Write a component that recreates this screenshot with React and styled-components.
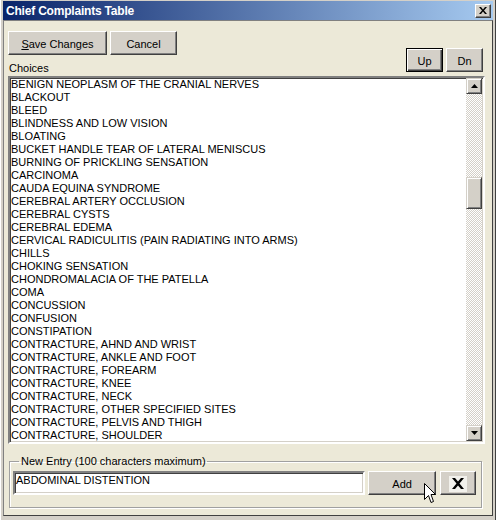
import React from 'react';
import styled, { createGlobalStyle } from 'styled-components';

const GlobalStyle = createGlobalStyle`
  html, body {
    margin: 0;
    padding: 0;
    width: 496px;
    height: 520px;
    overflow: hidden;
    background: #d4d0c8;
  }
  * {
    box-sizing: border-box;
  }
`;

const FONT = `"Liberation Sans", Arial, sans-serif`;

const Window = styled.div`
  position: relative;
  width: 496px;
  height: 520px;
  padding: 1px 2px 4px 3px;
  background: #d4d0c8;
  border-right: 1px solid #404040;
  box-shadow: inset 1px 0 #fff;
  display: flex;
  flex-direction: column;
  font-family: ${FONT};
  font-size: 11px;
  color: #000;
`;

const TitleBar = styled.div`
  height: 19px;
  flex: none;
  display: flex;
  align-items: center;
  justify-content: space-between;
  padding: 0 2px 0 3px;
  background: linear-gradient(to right, #0a246a, #a6caf0);
`;

const Title = styled.span`
  color: #fff;
  font-weight: bold;
  font-size: 12px;
  letter-spacing: -0.2px;
`;

const CloseBox = styled.div`
  width: 16px;
  height: 14px;
  background: #d4d0c8;
  border: 1px solid;
  border-color: #fff #404040 #404040 #fff;
  box-shadow: inset -1px -1px #808080;
  display: flex;
  align-items: center;
  justify-content: center;
`;

const Client = styled.div`
  flex: 1;
  display: flex;
  flex-direction: column;
  background: #ece9d8;
  border: 1px solid;
  border-color: #808080 #404040 #404040 #808080;
`;

const TopArea = styled.div`
  display: flex;
  justify-content: space-between;
  align-items: flex-end;
  padding: 10px 9px 0 4px;
`;

const LeftColumn = styled.div`
  display: flex;
  flex-direction: column;
`;

const ButtonRow = styled.div`
  display: flex;
  gap: ${p => p.$gap || 3}px;
`;

const Button = styled.div`
  width: ${p => p.$w}px;
  height: 24px;
  display: flex;
  align-items: center;
  justify-content: center;
  background: #d4d0c8;
  border: 1px solid;
  border-color: ${p => (p.$focused ? '#000' : '#fff #404040 #404040 #fff')};
  box-shadow: ${p =>
    p.$focused
      ? 'inset 1px 1px #fff, inset -1px -1px #404040, inset -2px -2px #808080'
      : 'inset -1px -1px #808080'};
  font-family: ${FONT};
  font-size: 11px;
  color: #000;
  padding-top: 1px;
`;

const Underlined = styled.span`
  text-decoration: underline;
  text-underline-offset: 1px;
`;

const Label = styled.div`
  margin-top: 7px;
  height: 14px;
  line-height: 13px;
  padding-left: 1px;
`;

const UpDn = styled(ButtonRow)`
  margin-bottom: 4px;
`;

const ListBox = styled.div`
  margin: 0 7px 0 4px;
  height: 368px;
  display: flex;
  background: #fff;
  border: 2px solid;
  border-color: #808080 #fff #fff #808080;
  box-shadow: inset 1px 1px #404040, inset -1px -1px #d4d0c8;
  padding: 0 1px 1px 1px;
`;

const Items = styled.div`
  flex: 1;
  overflow: hidden;
`;

const Row = styled.div`
  height: 13px;
  line-height: 13px;
  font-size: 11px;
  white-space: nowrap;
  color: #000;
`;

const ScrollBar = styled.div`
  width: 16px;
  display: flex;
  flex-direction: column;
  background-color: #fff;
  background-image: repeating-conic-gradient(#d4d0c8 0% 25%, #fff 0% 50%);
  background-size: 2px 2px;
`;

const ScrollButton = styled.div`
  width: 16px;
  height: 16px;
  flex: none;
  background: #d4d0c8;
  border: 1px solid;
  border-color: #d4d0c8 #404040 #404040 #d4d0c8;
  box-shadow: inset 1px 1px #fff, inset -1px -1px #808080;
  display: flex;
  align-items: center;
  justify-content: center;
`;

const Track = styled.div`
  flex: 1;
  display: flex;
  flex-direction: column;
`;

const Thumb = styled(ScrollButton)`
  height: 32px;
  margin-top: ${p => p.$offset}px;
`;

const Group = styled.fieldset`
  margin: 12px 10px 0 5px;
  padding: 4px 5px 12px 3px;
  border: 1px solid #a0a0a0;
  box-shadow: 1px 1px #fff, inset 1px 1px #fff;
  min-width: 0;
`;

const Legend = styled.legend`
  margin-left: 6px;
  padding: 0 1px 0 2px;
  font-size: 11px;
  line-height: 11px;
  color: #000;
`;

const EntryRow = styled.div`
  display: flex;
  align-items: flex-start;
  gap: 3px;
`;

const EntryBox = styled.div`
  width: 353px;
  height: 24px;
  background: #fff;
  border: 2px solid;
  border-color: #808080 #fff #fff #808080;
  box-shadow: inset 1px 1px #404040, inset -1px -1px #d4d0c8;
  padding: 1px 0 0 1px;
  line-height: 13px;
  font-size: 11px;
  white-space: nowrap;
`;

const ClearButton = styled(Button)`
  margin-left: 1px;
`;

const IconTile = styled.div`
  width: 18px;
  height: 16px;
  background: #f2f1ec;
  display: flex;
  align-items: center;
  justify-content: center;
`;

const Pointer = styled.svg`
  position: absolute;
  left: 424px;
  top: 483px;
  pointer-events: none;
`;

const choices = [
  'BENIGN NEOPLASM OF THE CRANIAL NERVES',
  'BLACKOUT',
  'BLEED',
  'BLINDNESS AND LOW VISION',
  'BLOATING',
  'BUCKET HANDLE TEAR OF LATERAL MENISCUS',
  'BURNING OF PRICKLING SENSATION',
  'CARCINOMA',
  'CAUDA EQUINA SYNDROME',
  'CEREBRAL ARTERY OCCLUSION',
  'CEREBRAL CYSTS',
  'CEREBRAL EDEMA',
  'CERVICAL RADICULITIS (PAIN RADIATING INTO ARMS)',
  'CHILLS',
  'CHOKING SENSATION',
  'CHONDROMALACIA OF THE PATELLA',
  'COMA',
  'CONCUSSION',
  'CONFUSION',
  'CONSTIPATION',
  'CONTRACTURE, AHND AND WRIST',
  'CONTRACTURE, ANKLE AND FOOT',
  'CONTRACTURE, FOREARM',
  'CONTRACTURE, KNEE',
  'CONTRACTURE, NECK',
  'CONTRACTURE, OTHER SPECIFIED SITES',
  'CONTRACTURE, PELVIS AND THIGH',
  'CONTRACTURE, SHOULDER',
];

const Arrow = ({ down }) => (
  <svg width="7" height="4" viewBox="0 0 7 4">
    <path d={down ? 'M0 0h7L3.5 4z' : 'M3.5 0L7 4H0z'} fill="#000" />
  </svg>
);

export default function App() {
  return (
    <>
      <GlobalStyle />
      <Window>
        <TitleBar>
          <Title>Chief Complaints Table</Title>
          <CloseBox>
            <svg width="8" height="7" viewBox="0 0 8 7">
              <path d="M0 0h2l2 2.5L6 0h2L5 3.5 8 7H6L4 4.5 2 7H0l3-3.5z" fill="#000" />
            </svg>
          </CloseBox>
        </TitleBar>
        <Client>
          <TopArea>
            <LeftColumn>
              <ButtonRow>
                <Button $w={99}>
                  <span><Underlined>S</Underlined>ave Changes</span>
                </Button>
                <Button $w={67}>Cancel</Button>
              </ButtonRow>
              <Label>Choices</Label>
            </LeftColumn>
            <UpDn>
              <Button $w={37} $focused>Up</Button>
              <Button $w={37}>Dn</Button>
            </UpDn>
          </TopArea>
          <ListBox>
            <Items>
              {choices.map(c => (
                <Row key={c}>{c}</Row>
              ))}
            </Items>
            <ScrollBar>
              <ScrollButton><Arrow /></ScrollButton>
              <Track>
                <Thumb $offset={83} />
              </Track>
              <ScrollButton><Arrow down /></ScrollButton>
            </ScrollBar>
          </ListBox>
          <Group>
            <Legend>New Entry (100 characters maximum)</Legend>
            <EntryRow>
              <EntryBox>ABDOMINAL DISTENTION</EntryBox>
              <Button $w={68}>Add</Button>
              <ClearButton $w={36}>
                <IconTile>
                  <svg width="12" height="11" viewBox="0 0 12 11">
                    <path d="M0 0h3l3 3.5L9 0h3L7.5 5.5 12 11H9L6 7.5 3 11H0l4.5-5.5z" fill="#000" />
                  </svg>
                </IconTile>
              </ClearButton>
            </EntryRow>
          </Group>
        </Client>
        <Pointer width="13" height="21" viewBox="0 0 13 21">
          <path
            d="M0.5 0.5V16.5L4.5 12.5L7 19.5L9.5 18.5L7 11.5H11.5Z"
            fill="#fff"
            stroke="#000"
            strokeWidth="1"
            strokeLinejoin="miter"
          />
        </Pointer>
      </Window>
    </>
  );
}
